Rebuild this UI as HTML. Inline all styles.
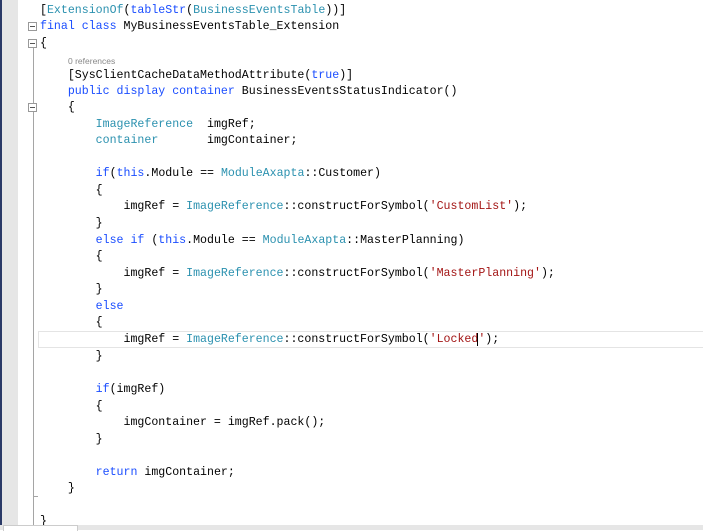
<html><head><style>
body{margin:0;width:703px;height:530px;background:#fff;position:relative;overflow:hidden;font-family:"Liberation Mono",monospace;font-size:11.6px;}
.l{position:absolute;left:40px;white-space:pre;line-height:16px;color:#000;margin-top:1px}
.k{color:#1a4dff}.t{color:#2b91af}.s{color:#a31515}
.b{position:absolute;left:28px;width:7px;height:7px;border:1px solid #999;background:#fff}
.b:after{content:"";position:absolute;left:1px;top:3px;width:5px;height:1px;background:#555}
</style></head><body>
<div style="position:absolute;left:0;top:0;width:2px;height:530px;background:#2b3a67"></div>
<div style="position:absolute;left:2px;top:0;width:16px;height:530px;background:#e6e6e6"></div>
<div style="position:absolute;left:33px;top:48px;width:1px;height:478px;background:#a5a5a5"></div>
<div style="position:absolute;left:34px;top:496px;width:4px;height:1px;background:#a5a5a5"></div>
<div style="position:absolute;left:38px;top:331px;width:670px;height:15px;border:1px solid #e4e4e4"></div>
<div class="b" style="top:22px"></div><div class="b" style="top:39px"></div><div class="b" style="top:103px"></div>
<div style="position:absolute;left:68px;top:56px;font-family:'Liberation Sans',sans-serif;font-size:8.5px;color:#888">0 references</div>
<div class="l" style="top:2px">[<span class="t">ExtensionOf</span>(<span class="k">tableStr</span>(<span class="t">BusinessEventsTable</span>))]</div>
<div class="l" style="top:18px"><span class="k">final class</span> MyBusinessEventsTable_Extension</div>
<div class="l" style="top:35px">{</div>
<div class="l" style="top:67px">    [SysClientCacheDataMethodAttribute(<span class="k">true</span>)]</div>
<div class="l" style="top:83px">    <span class="k">public display container</span> BusinessEventsStatusIndicator()</div>
<div class="l" style="top:99px">    {</div>
<div class="l" style="top:116px">        <span class="t">ImageReference</span>  imgRef;</div>
<div class="l" style="top:132px">        <span class="t">container</span>       imgContainer;</div>
<div class="l" style="top:165px">        <span class="k">if</span>(<span class="k">this</span>.Module == <span class="t">ModuleAxapta</span>::Customer)</div>
<div class="l" style="top:182px">        {</div>
<div class="l" style="top:198px">            imgRef = <span class="t">ImageReference</span>::constructForSymbol(<span class="s">'CustomList'</span>);</div>
<div class="l" style="top:215px">        }</div>
<div class="l" style="top:232px">        <span class="k">else if</span> (<span class="k">this</span>.Module == <span class="t">ModuleAxapta</span>::MasterPlanning)</div>
<div class="l" style="top:248px">        {</div>
<div class="l" style="top:265px">            imgRef = <span class="t">ImageReference</span>::constructForSymbol(<span class="s">'MasterPlanning'</span>);</div>
<div class="l" style="top:281px">        }</div>
<div class="l" style="top:298px">        <span class="k">else</span></div>
<div class="l" style="top:314px">        {</div>
<div class="l" style="top:331px">            imgRef = <span class="t">ImageReference</span>::constructForSymbol(<span class="s">'Locked</span><span style="border-left:1px solid #000;margin-left:-1px"></span><span class="s">'</span>);</div>
<div class="l" style="top:348px">        }</div>
<div class="l" style="top:381px">        <span class="k">if</span>(imgRef)</div>
<div class="l" style="top:398px">        {</div>
<div class="l" style="top:414px">            imgContainer = imgRef.pack();</div>
<div class="l" style="top:431px">        }</div>
<div class="l" style="top:464px">        <span class="k">return</span> imgContainer;</div>
<div class="l" style="top:480px">    }</div>
<div class="l" style="top:513px">}</div>
<div style="position:absolute;left:0;top:525px;width:703px;height:5px;background:#e6e6e6"></div>
<div style="position:absolute;left:3px;top:525px;width:73px;height:5px;background:#fff;border:1px solid #ccc;border-bottom:none"></div>
</body></html>
